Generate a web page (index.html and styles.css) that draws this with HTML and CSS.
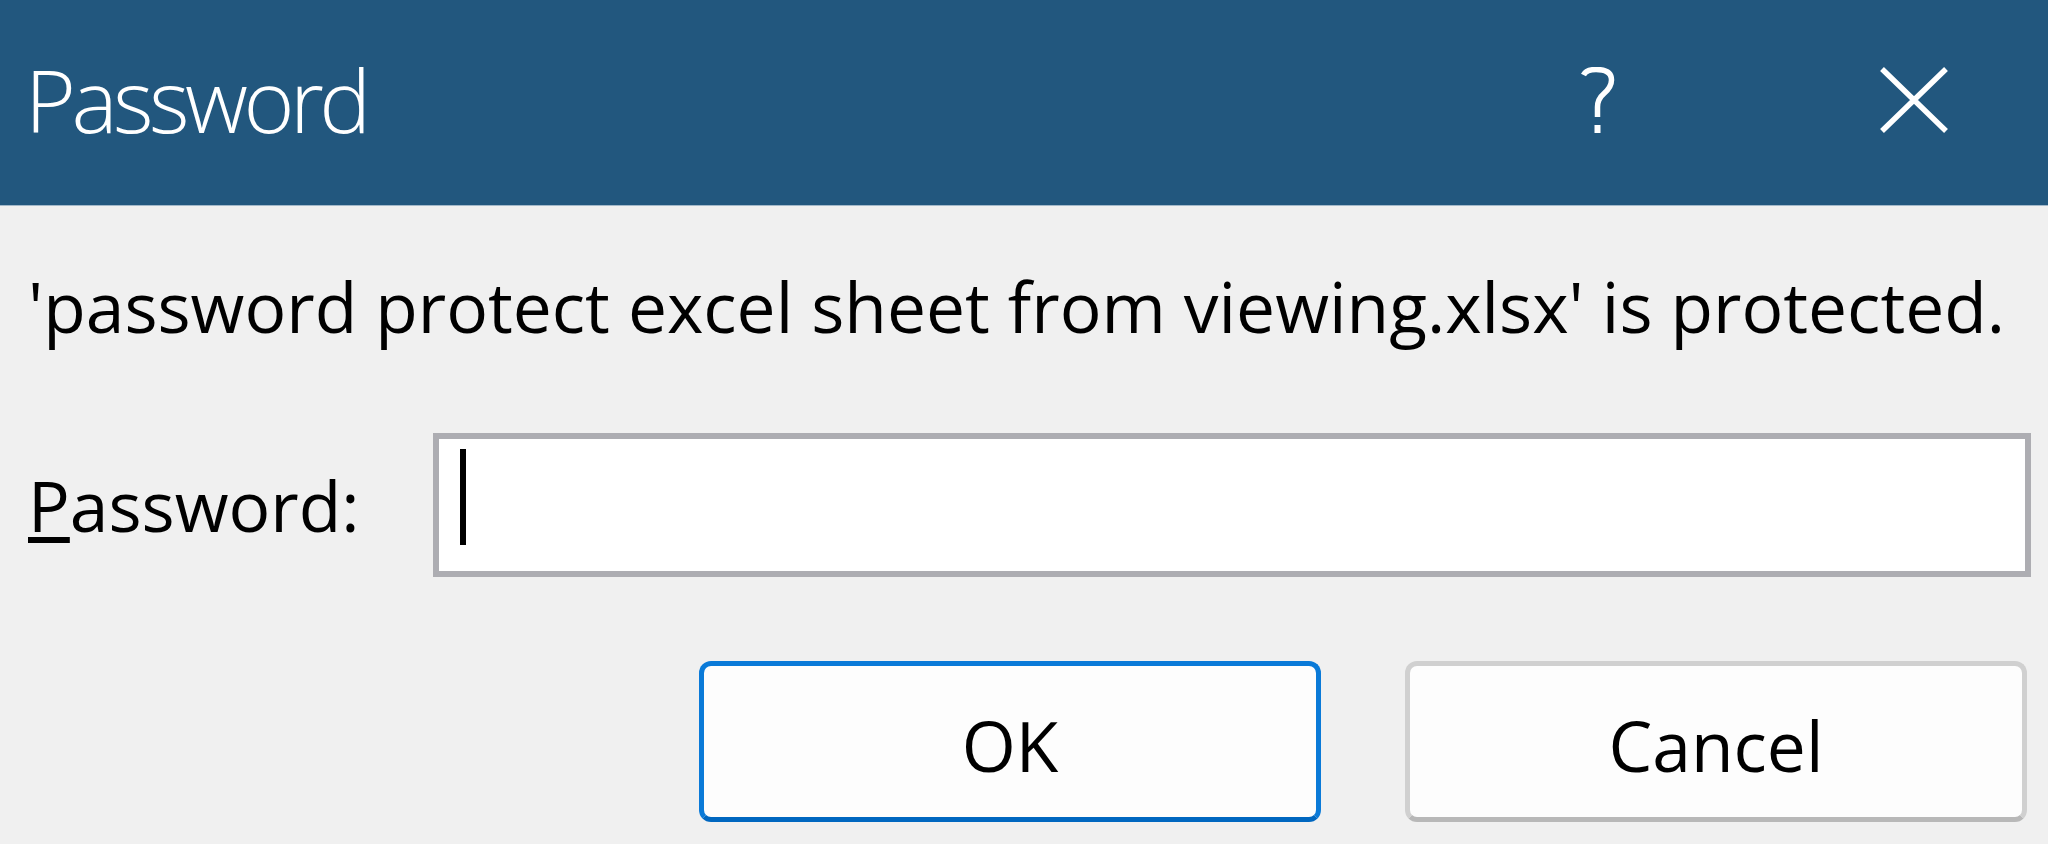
FILE: index.html
```html
<!DOCTYPE html>
<html lang="en">
<head>
<meta charset="utf-8">
<title>Password</title>
<link rel="stylesheet" href="styles.css">
</head>
<body>
<div class="dialog">
  <header class="titlebar">
    <span class="title">Password</span>
    <div class="controls">
      <svg class="help" width="34" height="66" viewBox="0 0 34 66" aria-label="Help">
        <path d="M2.5 8 Q5 2.5 15 2.5 Q30.5 2.5 30.5 13 Q30.5 20 23 26.5 Q16.5 32 16.5 40 V50" fill="none" stroke="#ffffff" stroke-width="5.5" stroke-linejoin="miter"/>
        <rect x="13.5" y="58" width="6" height="8" fill="#ffffff"/>
      </svg>
      <svg class="close" width="68" height="66" viewBox="0 0 68 66" aria-label="Close">
        <path d="M2 2 L66 64 M66 2 L2 64" fill="none" stroke="#ffffff" stroke-width="5.5"/>
      </svg>
    </div>
  </header>
  <main class="content">
    <p class="message">'password protect excel sheet from viewing.xlsx' is protected.</p>
    <div class="field">
      <label class="label"><span class="accel">P</span>assword:</label>
      <div class="input"><span class="caret"></span></div>
    </div>
    <div class="buttons">
      <button class="btn btn-ok">OK</button>
      <button class="btn btn-cancel">Cancel</button>
    </div>
  </main>
</div>
</body>
</html>
```

FILE: styles.css
```css
html, body {
  margin: 0;
  padding: 0;
  background: #f0f0f0;
}

body {
  font-family: "Open Sans", "Noto Sans", "Liberation Sans", sans-serif;
  color: #000000;
  width: 2048px;
  height: 844px;
  overflow: hidden;
}

.dialog {
  display: flex;
  flex-direction: column;
}

.titlebar {
  display: flex;
  height: 205px;
  background: #22577e;
  border-bottom: 1px solid #a3b9ca;
  padding-left: 25px;
  padding-right: 100px;
}

.title {
  align-self: flex-start;
  color: #ffffff;
  font-size: 87px;
  font-weight: 350;
  line-height: 199px;
  letter-spacing: -4.5px;
}

.controls {
  margin-left: auto;
  display: flex;
  align-items: flex-start;
  gap: 265px;
  padding-top: 67px;
}

.controls svg {
  display: block;
}

.content {
  padding: 52px 17px 0 28px;
}

.message {
  margin: 0;
  font-size: 69.5px;
  line-height: 96px;
  white-space: nowrap;
}

.field {
  display: flex;
  align-items: center;
  margin-top: 79px;
}

.label {
  flex: none;
  width: 405px;
  font-size: 69.5px;
  line-height: 96px;
}

.accel {
  text-decoration: underline;
  text-decoration-thickness: 6px;
  text-underline-offset: 5px;
}

.input {
  flex: 1;
  box-sizing: border-box;
  height: 144px;
  background: #ffffff;
  border: 6px solid #adadb2;
  padding: 10px 0 0 21px;
  display: flex;
  align-items: flex-start;
}

.caret {
  display: block;
  width: 6px;
  height: 96px;
  background: #000000;
}

.buttons {
  display: flex;
  justify-content: flex-end;
  gap: 84px;
  margin-top: 84px;
  padding-right: 4px;
}

.btn {
  box-sizing: border-box;
  width: 622px;
  height: 161px;
  padding: 7px 0 0 0;
  background: #fdfdfd;
  border: 5px solid #d0d0d0;
  border-bottom-color: #b8b8b8;
  border-radius: 12px;
  font-family: "Open Sans", "Noto Sans", "Liberation Sans", sans-serif;
  font-size: 69.5px;
  line-height: 96px;
  color: #000000;
  display: flex;
  align-items: center;
  justify-content: center;
}

.btn-ok {
  border-color: #0a7ad8;
  border-bottom-color: #0067c0;
}
```
